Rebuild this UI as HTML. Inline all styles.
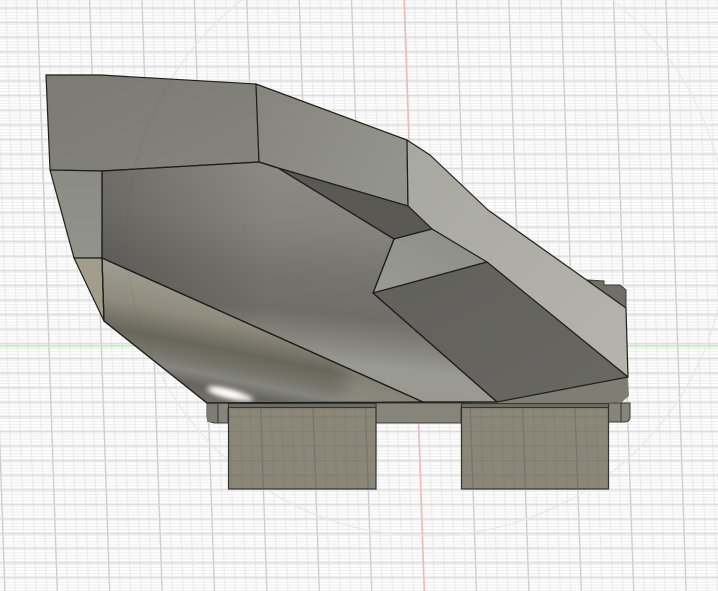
<!DOCTYPE html>
<html><head><meta charset="utf-8"><style>html,body{margin:0;padding:0;background:#fff;width:718px;height:591px;overflow:hidden}svg{display:block}</style></head><body>
<svg width="718" height="591" viewBox="0 0 718 591" xmlns="http://www.w3.org/2000/svg">
<defs>
<pattern id="fine" width="10" height="2.92" patternUnits="userSpaceOnUse" y="0.5"><rect width="10" height="1.1" fill="#eeeeee"/></pattern>
<pattern id="hm" width="10" height="14.6" patternUnits="userSpaceOnUse" y="7.5"><rect width="10" height="1.2" fill="#d9d9d9"/></pattern>
<pattern id="vm" width="52.4" height="100" patternUnits="userSpaceOnUse" x="36.5" patternTransform="skewX(1.95)">
<rect width="1.3" height="100" fill="#cbcbcb"/>
<rect x="10.48" width="1.2" height="100" fill="#ebebeb"/><rect x="20.96" width="1.2" height="100" fill="#ebebeb"/><rect x="31.44" width="1.2" height="100" fill="#ebebeb"/><rect x="41.92" width="1.2" height="100" fill="#ebebeb"/>
</pattern>
<pattern id="vd" width="52.4" height="100" patternUnits="userSpaceOnUse" x="36.5" patternTransform="skewX(1.95)">
<rect width="1.3" height="100" fill="#6f6d60"/>
<rect x="10.48" width="1.2" height="100" fill="#807e70"/><rect x="20.96" width="1.2" height="100" fill="#807e70"/><rect x="31.44" width="1.2" height="100" fill="#807e70"/><rect x="41.92" width="1.2" height="100" fill="#807e70"/>
</pattern>
<pattern id="hd" width="10" height="14.6" patternUnits="userSpaceOnUse" y="7.5"><rect width="10" height="1.2" fill="#787669"/></pattern>
<linearGradient id="gA" x1="0" y1="0" x2="1" y2="1"><stop offset="0" stop-color="#7b7b74"/><stop offset="1" stop-color="#84847d"/></linearGradient>
<linearGradient id="gB" x1="0" y1="0" x2="1" y2="0.4"><stop offset="0" stop-color="#85857e"/><stop offset="1" stop-color="#92938c"/></linearGradient>
<linearGradient id="gC" x1="0" y1="0" x2="1" y2="1"><stop offset="0" stop-color="#a7a8a0"/><stop offset="1" stop-color="#b5b4ac"/></linearGradient>
<linearGradient id="gE" x1="0" y1="1" x2="1" y2="0"><stop offset="0" stop-color="#9a9a94"/><stop offset="1" stop-color="#8d8d87"/></linearGradient>
<linearGradient id="gF" x1="0" y1="0" x2="1" y2="1"><stop offset="0" stop-color="#61605b"/><stop offset="1" stop-color="#686762"/></linearGradient>
<linearGradient id="gG" gradientUnits="userSpaceOnUse" x1="300" y1="165" x2="277" y2="400"><stop offset="0" stop-color="#8b8a84"/><stop offset="0.25" stop-color="#84837d"/><stop offset="0.47" stop-color="#74736d"/><stop offset="0.62" stop-color="#6f6e68"/><stop offset="0.74" stop-color="#87877f"/><stop offset="0.82" stop-color="#9a9a95"/><stop offset="1" stop-color="#9a988e"/></linearGradient>
<linearGradient id="gGl" gradientUnits="userSpaceOnUse" x1="102" y1="0" x2="270" y2="0"><stop offset="0" stop-color="#000" stop-opacity=".2"/><stop offset="1" stop-color="#000" stop-opacity="0"/></linearGradient>
<linearGradient id="gH" gradientUnits="userSpaceOnUse" x1="203" y1="285" x2="180" y2="397"><stop offset="0" stop-color="#9d9b8f"/><stop offset="0.28" stop-color="#8f8c7e"/><stop offset="0.52" stop-color="#69675c"/><stop offset="0.66" stop-color="#77756b"/><stop offset="0.76" stop-color="#858580"/><stop offset="0.87" stop-color="#66655d"/><stop offset="1" stop-color="#73716a"/></linearGradient>
<linearGradient id="gI" x1="0" y1="0" x2="0" y2="1"><stop offset="0" stop-color="#8b8b85"/><stop offset="1" stop-color="#93938d"/></linearGradient>
<clipPath id="cH"><polygon points="102,258 423,402 207,403 104,321"/></clipPath>
<clipPath id="cG"><polygon points="102,171 259,162 278,168 394,239 373,293 497,402 423,402 102,258"/></clipPath>
<clipPath id="cM"><polygon points="46,75 100,75 256,84 259,162 407,140 408,206 373,293 497,402 423,402 207,403 104,321 74,258 50,170"/></clipPath>
<filter id="b1" x="-40%" y="-150%" width="180%" height="400%"><feGaussianBlur stdDeviation="2.6"/></filter>
<filter id="b8" x="-50%" y="-100%" width="200%" height="300%"><feGaussianBlur stdDeviation="10"/></filter>
</defs>
<rect width="718" height="591" fill="#fff"/>
<rect width="718" height="591" fill="url(#fine)"/>
<rect width="718" height="591" fill="url(#vm)"/>
<rect width="718" height="591" fill="url(#hm)"/>
<line x1="0" y1="346" x2="718" y2="346" stroke="#a8f0a8" stroke-width="1.2"/>
<line x1="404.5" y1="0" x2="424.5" y2="591" stroke="#ffb4b4" stroke-width="1.2"/>
<circle cx="427" cy="236" r="300" fill="none" stroke="#e8e8e8" stroke-width="1.3"/>

<polygon points="588,280 604,281 604,285 620,285 626,290 626,310 610,300" fill="#6f6e68" stroke="#3a3a38" stroke-width="1"/>

<path d="M207,403 H630 V417 Q630,422 624,422 H608 V408 H461 V423 H376 V408 H228 V423 H216 Q207,423 207,416 Z" fill="#87857a" stroke="#3a3a36" stroke-width="1"/>
<polygon points="497,402 628,377 629,396 622,402 608,403 461,403" fill="#807e74"/>
<rect x="207" y="403" width="11" height="19" fill="#7b7b73" opacity=".9"/>
<line x1="218" y1="403" x2="218" y2="423" stroke="#333" stroke-width="1"/>
<line x1="621" y1="402" x2="621" y2="422" stroke="#333" stroke-width="1"/>
<rect x="228.5" y="404" width="147.5" height="85" fill="#8a8778" stroke="#33332f" stroke-width="1.2"/>
<rect x="461.5" y="404" width="147" height="85" fill="#8a8778" stroke="#33332f" stroke-width="1.2"/>
<rect x="229" y="408" width="146.5" height="80" fill="url(#vd)" opacity=".7"/>
<rect x="462" y="408" width="146" height="80" fill="url(#vd)" opacity=".7"/>
<rect x="229" y="408" width="146.5" height="80" fill="url(#hd)" opacity=".6"/>
<rect x="462" y="408" width="146" height="80" fill="url(#hd)" opacity=".6"/>
<line x1="228" y1="407.5" x2="376" y2="407.5" stroke="#33332f" stroke-width="1.2"/>
<line x1="461" y1="407.5" x2="608" y2="407.5" stroke="#33332f" stroke-width="1.2"/>
<rect x="229" y="404" width="146.5" height="3" fill="#6c6b62"/>
<rect x="462" y="404" width="146" height="3" fill="#6c6b62"/>

<g stroke="#1e1e1c" stroke-width="1.2" stroke-linejoin="round">
<polygon points="46,75 100,75 256,84 259,162 102,171 50,170" fill="url(#gA)"/>
<polygon points="256,84 407,140 408,206 278,168 259,162" fill="url(#gB)"/>
<polygon points="407,140 430,155 488,210 626,308 628,377 488,263 432,229 408,206" fill="url(#gC)"/>
<polygon points="278,168 408,206 432,229 394,239" fill="#5a5954"/>
<polygon points="394,239 432,229 487,262 373,293" fill="url(#gE)"/>
<polygon points="373,293 487,262 628,377 497,402" fill="url(#gF)"/>
<polygon points="102,171 259,162 278,168 394,239 373,293 497,402 423,402 102,258" fill="url(#gG)"/>
<polygon points="50,170 102,171 102,258 74,258" fill="url(#gI)"/>
<polygon points="74,258 102,258 104,321" fill="#a39d8c"/>
<polygon points="102,258 423,402 207,403 104,321" fill="url(#gH)"/>
</g>
<rect x="100" y="160" width="180" height="160" fill="url(#gGl)" clip-path="url(#cG)"/>
<g clip-path="url(#cH)">
<polygon points="350,360 440,392 430,415 340,405" fill="#97958a" opacity=".65" filter="url(#b8)"/>
<ellipse cx="230" cy="394" rx="24" ry="4" fill="#fff" transform="rotate(14 230 394)" filter="url(#b1)"/>
<ellipse cx="226" cy="393" rx="16" ry="2.5" fill="#fff" transform="rotate(14 226 393)" filter="url(#b1)"/>
</g>
<g fill="none" stroke="#1e1e1c" stroke-width="1.2" stroke-linejoin="round">
<polygon points="102,258 423,402 207,403 104,321"/>
<polygon points="102,171 259,162 278,168 394,239 373,293 497,402 423,402 102,258"/>
<line x1="102" y1="258" x2="104" y2="321"/>
</g>
<circle cx="427" cy="236" r="300" fill="none" stroke="#55554f" stroke-opacity=".16" stroke-width="1" clip-path="url(#cM)"/>
</svg>
</body></html>
